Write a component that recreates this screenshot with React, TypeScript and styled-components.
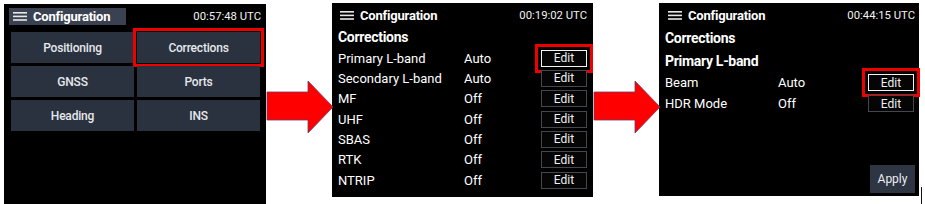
import styled, { createGlobalStyle } from "styled-components";

////////////////////////////////////////////////////
////////////////////// GLOBAL //////////////////////
////////////////////////////////////////////////////

const GlobalStyle = createGlobalStyle`
   html, body {
      margin: 0;
      padding: 0;
      background: #fff;
   }
   body {
      font-family: Roboto, "Liberation Sans", Arial, sans-serif;
   }
`;

////////////////////////////////////////////////////
//////////////////// COMPONENTS ////////////////////
////////////////////////////////////////////////////

function Hamburger() {
   return (
      <svg width="14" height="9" viewBox="0 0 14 9">
         <rect x="0" y="0" width="14" height="1.6" fill="#e8e8e8" />
         <rect x="0" y="3.6" width="14" height="1.6" fill="#e8e8e8" />
         <rect x="0" y="7.2" width="14" height="1.6" fill="#e8e8e8" />
      </svg>
   );
}

function Arrow() {
   return (
      <ArrowBox>
         <svg width="68" height="54" viewBox="0 0 68 54">
            <path
               d="M1 12 L42 12 L42 1 L67 27 L42 53 L42 40 L1 40 Z"
               fill="#ff0000"
               stroke="#6a3c68"
               strokeWidth="0.8"
            />
         </svg>
      </ArrowBox>
   );
}

interface IRow {
   label: string;
   value: string;
   active?: boolean;
}

const correctionRows: IRow[] = [
   { label: "Primary L-band", value: "Auto", active: true },
   { label: "Secondary L-band", value: "Auto" },
   { label: "MF", value: "Off" },
   { label: "UHF", value: "Off" },
   { label: "SBAS", value: "Off" },
   { label: "RTK", value: "Off" },
   { label: "NTRIP", value: "Off" },
];

const lbandRows: IRow[] = [
   { label: "Beam", value: "Auto", active: true },
   { label: "HDR Mode", value: "Off" },
];

const menuItems = ["Positioning", "Corrections", "GNSS", "Ports", "Heading", "INS"];

export default function App() {
   return (
      <>
         <GlobalStyle />
         <Page>
            {/* screen 1 : configuration menu */}
            <Screen $w={262} $h={204} $top={4}>
               <MenuHeader>
                  <TitleChip>
                     <Hamburger />
                     <span>Configuration</span>
                  </TitleChip>
                  <Clock>00:57:48 UTC</Clock>
               </MenuHeader>
               <MenuGrid>
                  {menuItems.map((item) => (
                     <MenuButton key={item} $active={item === "Corrections"}>
                        {item}
                     </MenuButton>
                  ))}
               </MenuGrid>
            </Screen>

            <Arrow />

            {/* screen 2 : corrections list */}
            <Screen $w={261} $h={194} $top={3}>
               <Header $padRight={6} $padLeft={8}>
                  <HeaderTitle>
                     <Hamburger />
                     <span>Configuration</span>
                  </HeaderTitle>
                  <Clock>00:19:02 UTC</Clock>
               </Header>
               <SectionTitle $h={23}>Corrections</SectionTitle>
               {correctionRows.map((row) => (
                  <Row key={row.label} $cols="126px 77px 46px" $h={20.33}>
                     <span>{row.label}</span>
                     <span>{row.value}</span>
                     <EditButton $active={row.active}>Edit</EditButton>
                  </Row>
               ))}
            </Screen>

            <Arrow />

            {/* screen 3 : primary l-band */}
            <Screen $w={260} $h={193} $top={3}>
               <Header $padRight={4} $padLeft={9}>
                  <HeaderTitle>
                     <Hamburger />
                     <span>Configuration</span>
                  </HeaderTitle>
                  <Clock>00:44:15 UTC</Clock>
               </Header>
               <SectionTitle $h={25}>Corrections</SectionTitle>
               <SectionTitle $h={22}>Primary L-band</SectionTitle>
               {lbandRows.map((row) => (
                  <Row key={row.label} $cols="113px 90px 46px" $h={21}>
                     <span>{row.label}</span>
                     <span>{row.value}</span>
                     <EditButton $active={row.active}>Edit</EditButton>
                  </Row>
               ))}
               <ApplyButton>Apply</ApplyButton>
            </Screen>

            <Cursor />
         </Page>
      </>
   );
}

////////////////////////////////////////////////////
//////////////// STYLED COMPONENTS /////////////////
////////////////////////////////////////////////////

const Page = styled.div`
   display: flex;
   align-items: flex-start;
   height: 204px;
   padding-left: 4px;
   overflow: hidden;
`;

const Screen = styled.div<{ $w: number; $h: number; $top: number }>`
   box-sizing: border-box;
   flex-shrink: 0;
   display: flex;
   flex-direction: column;
   width: ${(p) => p.$w}px;
   height: ${(p) => p.$h}px;
   margin-top: ${(p) => p.$top}px;
   background: #000;
   color: #fff;
`;

const ArrowBox = styled.div`
   flex-shrink: 0;
   width: 66px;
   margin-top: 80px;
   position: relative;
   z-index: 1;
   svg {
      display: block;
   }
`;

const MenuHeader = styled.div`
   display: flex;
   align-items: center;
   justify-content: space-between;
   height: 17px;
   padding: 4px 5px 7px 5px;
`;

const TitleChip = styled.div`
   display: flex;
   align-items: center;
   gap: 6px;
   width: 117px;
   height: 17px;
   box-sizing: border-box;
   padding-left: 4px;
   background: #3a4150;
   font-size: 13px;
   font-weight: 700;
   letter-spacing: -0.2px;
`;

const Header = styled.div<{ $padLeft: number; $padRight: number }>`
   display: flex;
   align-items: center;
   justify-content: space-between;
   height: 19px;
   padding: 3px ${(p) => p.$padRight}px 0 ${(p) => p.$padLeft}px;
`;

const HeaderTitle = styled.div`
   display: flex;
   align-items: center;
   gap: 6px;
   font-size: 13px;
   font-weight: 700;
   letter-spacing: -0.2px;
`;

const Clock = styled.span`
   font-size: 11.3px;
   color: #f2f2f2;
`;

const MenuGrid = styled.div`
   display: grid;
   grid-template-columns: 123px 123px;
   grid-auto-rows: 31px;
   gap: 3px;
   padding: 0 6px 0 7px;
`;

const MenuButton = styled.div<{ $active?: boolean }>`
   display: flex;
   align-items: center;
   justify-content: center;
   background: #2a3240;
   color: #e6e8ec;
   font-size: 12px;
   font-weight: 500;
   letter-spacing: -0.2px;
   outline: ${(p) => (p.$active ? "3px solid #ee0000" : "none")};
   outline-offset: 1px;
`;

const SectionTitle = styled.div<{ $h: number }>`
   display: flex;
   align-items: center;
   height: ${(p) => p.$h}px;
   padding-left: 6px;
   font-size: 14px;
   font-weight: 700;
   letter-spacing: -0.3px;
`;

const Row = styled.div<{ $cols: string; $h: number }>`
   display: grid;
   grid-template-columns: ${(p) => p.$cols};
   align-items: center;
   height: ${(p) => p.$h}px;
   padding-left: 6px;
   font-size: 13px;
`;

const EditButton = styled.div<{ $active?: boolean }>`
   box-sizing: border-box;
   display: flex;
   align-items: center;
   justify-content: center;
   height: 17px;
   background: #050505;
   border: ${(p) => (p.$active ? "1.5px solid #f4f4f4" : "1px solid #44474d")};
   outline: ${(p) => (p.$active ? "3px solid #ee0000" : "none")};
   outline-offset: 3px;
   font-size: 12px;
   color: #f0f0f0;
`;

const ApplyButton = styled.div`
   display: flex;
   align-items: center;
   justify-content: center;
   align-self: flex-end;
   width: 45px;
   height: 28px;
   margin: auto 4px 3px 0;
   background: #2e3543;
   color: #eceef2;
   font-size: 12px;
`;

const Cursor = styled.div`
   align-self: flex-end;
   width: 1px;
   height: 17px;
   margin-left: 2px;
   background: #111;
`;
